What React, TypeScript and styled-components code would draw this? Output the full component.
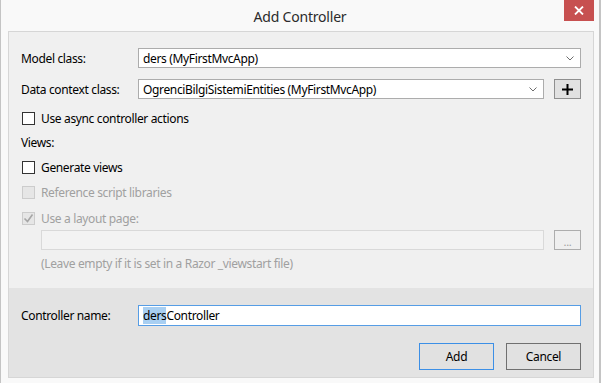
import styled, { createGlobalStyle } from "styled-components"

const GlobalStyle = createGlobalStyle`
    html, body {
        margin: 0;
        padding: 0;
        background: #ffffff;
    }
    body {
        font-family: "Segoe UI", "Noto Sans", "Open Sans", sans-serif;
        font-size: 12px;
        letter-spacing: -0.35px;
        color: #000;
    }
`

const Window = styled.div`
    box-sizing: border-box;
    width: 601px;
    height: 383px;
    background: #f9f9f9;
    border-left: 1px solid #c4c4c4;
    border-right: 2px solid #c4c4c4;
    display: flex;
    flex-direction: column;
`

const TitleBar = styled.div`
    height: 31px;
    flex: none;
    display: grid;
    grid-template-columns: 1fr auto 1fr;
    align-items: start;
`

const Title = styled.div`
    grid-column: 2;
    font-size: 14px;
    letter-spacing: -0.2px;
    color: #2b2b2b;
    line-height: 20px;
    padding-top: 7px;
`

const CloseButton = styled.div`
    grid-column: 3;
    justify-self: end;
    width: 30px;
    height: 21px;
    margin-right: 5px;
    background: #c75050;
    display: flex;
    align-items: center;
    justify-content: center;
`

const Panel = styled.div`
    box-sizing: border-box;
    margin: 0 5px 0 7px;
    height: 347px;
    border: 1px solid #d6d6d6;
    display: flex;
    flex-direction: column;
`

const UpperSection = styled.div`
    box-sizing: border-box;
    flex: none;
    background: #f0f0f0;
    height: 256px;
    padding: 16px 12px 0 12px;
    display: flex;
    flex-direction: column;
`

const LowerSection = styled.div`
    box-sizing: border-box;
    flex: 1;
    background: #e3e3e3;
    padding: 17px 12px 0 12px;
    display: flex;
    flex-direction: column;
`

const FieldRow = styled.div<{ top: number; h?: number }>`
    display: flex;
    align-items: center;
    margin-top: ${p => p.top}px;
    height: ${p => p.h ?? 20}px;
`

const Label = styled.div`
    width: 117px;
    flex: none;
`

const Combo = styled.div<{ width: number }>`
    box-sizing: border-box;
    width: ${p => p.width}px;
    height: 20px;
    background: #fff;
    border: 1px solid #acacac;
    display: flex;
    align-items: center;
    padding: 0 6px 0 4px;
    justify-content: space-between;
`

const ComboText = styled.span`
    white-space: nowrap;
`

const SquareButton = styled.div<{ disabled?: boolean }>`
    box-sizing: border-box;
    width: 27px;
    height: 20px;
    margin-left: auto;
    border: 1px solid ${p => p.disabled ? '#adadad' : '#8f8f8f'};
    background: ${p => p.disabled ? '#efefef' : '#e1e1e1'};
    display: flex;
    align-items: ${p => p.disabled ? 'flex-end' : 'center'};
    justify-content: center;
    color: #a0a0a0;
    font-size: 11px;
    line-height: 14px;
`

const CheckRow = styled.div<{ top: number; disabled?: boolean }>`
    display: flex;
    align-items: center;
    gap: 6px;
    height: 20px;
    margin-top: ${p => p.top}px;
    margin-left: 1px;
    color: ${p => p.disabled ? '#a0a0a0' : '#000'};
`

const Box = styled.div<{ disabled?: boolean }>`
    box-sizing: border-box;
    width: 13px;
    height: 13px;
    border: 1px solid ${p => p.disabled ? '#cccccc' : '#333333'};
    background: ${p => p.disabled ? '#e6e6e6' : '#ffffff'};
    display: flex;
    align-items: center;
    justify-content: center;
`

const SectionLabel = styled.div<{ top: number }>`
    margin-top: ${p => p.top}px;
    height: 20px;
    line-height: 20px;
`

const PathRow = styled.div`
    display: flex;
    align-items: center;
    margin-top: 2px;
    height: 20px;
    padding-left: 20px;
`

const PathInput = styled.div`
    box-sizing: border-box;
    width: 503px;
    height: 20px;
    background: #f3f3f3;
    border: 1px solid #d9d9d9;
`

const Hint = styled.div`
    margin-top: 6px;
    padding-left: 20px;
    height: 16px;
    line-height: 16px;
    color: #a0a0a0;
    white-space: nowrap;
`

const NameInput = styled.div`
    box-sizing: border-box;
    width: 443px;
    height: 21px;
    background: #fff;
    border: 1px solid #569de5;
    display: flex;
    align-items: center;
    padding-left: 4px;
    white-space: nowrap;
`

const Selected = styled.span`
    background: #a8cff2;
`

const ButtonBar = styled.div`
    display: flex;
    justify-content: flex-end;
    gap: 12px;
    margin-top: 17px;
`

const DialogButton = styled.div<{ primary?: boolean }>`
    box-sizing: border-box;
    width: 75px;
    height: 27px;
    background: #e1e1e1;
    border: 1px solid ${p => p.primary ? '#3c8fe6' : '#707070'};
    display: flex;
    align-items: center;
    justify-content: center;
`

const Chevron = () => (
    <svg width="8" height="5" viewBox="0 0 8 5">
        <polyline points="0.5,0.5 4,4 7.5,0.5" fill="none" stroke="#6d6d6d" strokeWidth="1" />
    </svg>
)

const Check = () => (
    <svg width="11" height="11" viewBox="0 0 11 11">
        <polyline points="1.5,5.5 4.5,8.5 9.5,1.5" fill="none" stroke="#a6a6a6" strokeWidth="1.6" />
    </svg>
)

export default function App() {
    return (
        <>
            <GlobalStyle />
            <Window>
                <TitleBar>
                    <Title>Add Controller</Title>
                    <CloseButton>
                        <svg width="10" height="9" viewBox="0 0 10 9">
                            <path d="M1 0.5 L9 8.5 M9 0.5 L1 8.5" stroke="#fff" strokeWidth="1.8" />
                        </svg>
                    </CloseButton>
                </TitleBar>
                <Panel>
                    <UpperSection>
                        <FieldRow top={0}>
                            <Label>Model class:</Label>
                            <Combo width={443}>
                                <ComboText>ders (MyFirstMvcApp)</ComboText>
                                <Chevron />
                            </Combo>
                        </FieldRow>
                        <FieldRow top={11}>
                            <Label>Data context class:</Label>
                            <Combo width={406}>
                                <ComboText>OgrenciBilgiSistemiEntities (MyFirstMvcApp)</ComboText>
                                <Chevron />
                            </Combo>
                            <SquareButton>
                                <svg width="11" height="11" viewBox="0 0 11 11">
                                    <rect x="0" y="4.5" width="11" height="2" fill="#000" />
                                    <rect x="4.5" y="0" width="2" height="11" fill="#000" />
                                </svg>
                            </SquareButton>
                        </FieldRow>
                        <CheckRow top={9}>
                            <Box />
                            <span>Use async controller actions</span>
                        </CheckRow>
                        <SectionLabel top={5}>Views:</SectionLabel>
                        <CheckRow top={4}>
                            <Box />
                            <span>Generate views</span>
                        </CheckRow>
                        <CheckRow top={5} disabled>
                            <Box disabled />
                            <span>Reference script libraries</span>
                        </CheckRow>
                        <CheckRow top={6} disabled>
                            <Box disabled>
                                <Check />
                            </Box>
                            <span>Use a layout page:</span>
                        </CheckRow>
                        <PathRow>
                            <PathInput />
                            <SquareButton disabled>...</SquareButton>
                        </PathRow>
                        <Hint>(Leave empty if it is set in a Razor _viewstart file)</Hint>
                    </UpperSection>
                    <LowerSection>
                        <FieldRow top={0} h={21}>
                            <Label>Controller name:</Label>
                            <NameInput>
                                <Selected>ders</Selected>Controller
                            </NameInput>
                        </FieldRow>
                        <ButtonBar>
                            <DialogButton primary>Add</DialogButton>
                            <DialogButton>Cancel</DialogButton>
                        </ButtonBar>
                    </LowerSection>
                </Panel>
            </Window>
        </>
    )
}
